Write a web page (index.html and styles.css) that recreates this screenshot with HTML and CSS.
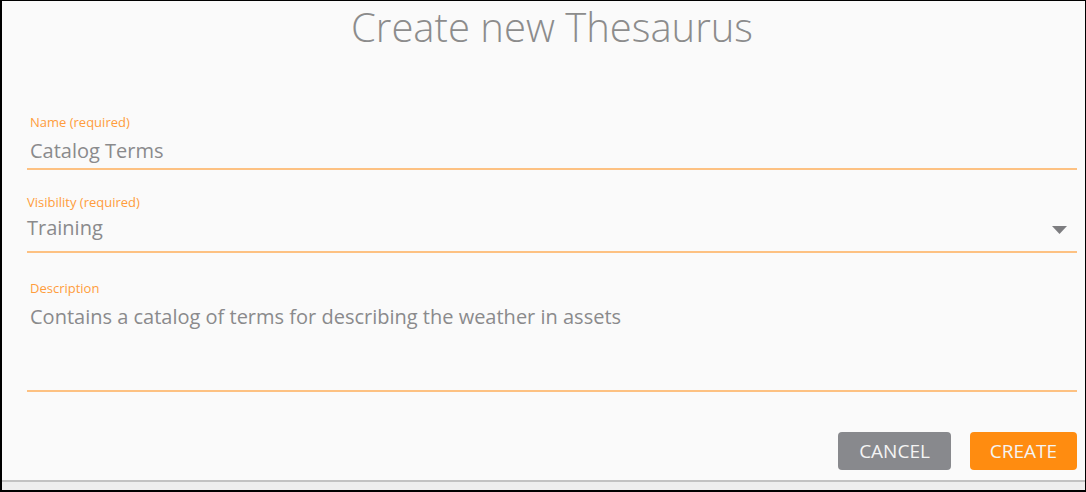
FILE: index.html
```html
<!DOCTYPE html>
<html lang="en">
<head>
<meta charset="utf-8">
<title>Create new Thesaurus</title>
<link rel="stylesheet" href="styles.css">
</head>
<body>
<div class="frame">
  <div class="dialog">
    <h1 class="title">Create new Thesaurus</h1>

    <div class="field field-name">
      <div class="label">Name (required)</div>
      <div class="value">Catalog Terms</div>
    </div>

    <div class="field field-visibility">
      <div class="label">Visibility (required)</div>
      <div class="value-row">
        <div class="value">Training</div>
        <svg class="caret" width="15" height="8" viewBox="0 0 15 8" aria-hidden="true">
          <polygon points="0,0 15,0 7.5,8" fill="#7d7d80"/>
        </svg>
      </div>
    </div>

    <div class="field field-desc">
      <div class="label">Description</div>
      <div class="value">Contains a catalog of terms for describing the weather in assets</div>
    </div>

    <div class="actions">
      <button class="btn btn-cancel">CANCEL</button>
      <button class="btn btn-create">CREATE</button>
    </div>
  </div>
  <div class="strip"></div>
</div>
</body>
</html>
```

FILE: styles.css
```css
html, body {
  margin: 0;
  padding: 0;
  background: #fafafa;
}

.frame {
  width: 1086px;
  height: 492px;
  box-sizing: border-box;
  border-top: 1px solid #000;
  border-right: 1px solid #000;
  border-bottom: 2px solid #000;
  border-left: 2px solid #000;
  background: #fafafa;
  display: flex;
  flex-direction: column;
  font-family: "Open Sans", "Noto Sans", sans-serif;
}

.dialog {
  flex: 1;
  padding: 1px 8px 0 25px;
}

.title {
  margin: 0;
  font-weight: 300;
  font-size: 40px;
  line-height: 50px;
  color: #8c8c8c;
  text-align: center;
}

.field {
  border-bottom: 2px solid #fdc182;
}

.label {
  font-size: 13px;
  line-height: 16px;
  color: #ff9d3c;
}

.value {
  font-size: 20px;
  line-height: 26px;
  color: #8a8a8c;
}

.field-name {
  margin-top: 62px;
  padding-bottom: 4px;
}
.field-name .label,
.field-name .value {
  padding-left: 3px;
}
.field-name .value {
  margin-top: 8px;
}

.field-visibility {
  margin-top: 24px;
  padding-bottom: 10px;
}
.value-row {
  display: flex;
  justify-content: space-between;
  align-items: flex-start;
  margin-top: 5px;
}
.caret {
  margin-top: 11px;
  margin-right: 10px;
}

.field-desc {
  margin-top: 27px;
  padding-bottom: 60px;
}
.field-desc .label,
.field-desc .value {
  padding-left: 3px;
}
.field-desc .value {
  margin-top: 8px;
}

.actions {
  margin-top: 40px;
  display: flex;
  justify-content: flex-end;
  gap: 19px;
}

.btn {
  height: 38px;
  border: none;
  border-radius: 4px;
  font-family: "Open Sans", "Noto Sans", sans-serif;
  font-size: 19px;
  font-weight: 400;
  color: #f4f4f4;
  padding: 0;
  cursor: pointer;
}
.btn-cancel {
  width: 113px;
  background: #88898d;
}
.btn-create {
  width: 107px;
  background: #ff8c10;
}

.strip {
  height: 8px;
  border-top: 2px solid #c2c2c2;
  background: #eeeeee;
}
```
